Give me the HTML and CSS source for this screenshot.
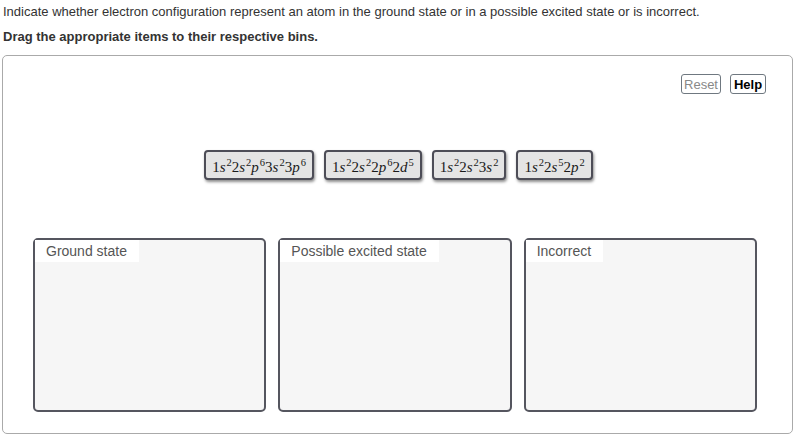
FILE: index.html
```html
<!DOCTYPE html>
<html>
<head>
<meta charset="utf-8">
<link rel="stylesheet" href="styles.css">
</head>
<body>
<p class="intro">Indicate whether electron configuration represent an atom in the ground state or in a possible excited state or is incorrect.</p>
<p class="instr">Drag the appropriate items to their respective bins.</p>
<div class="panel">
  <div class="toolbar">
    <button class="btn reset">Reset</button>
    <button class="btn help">Help</button>
  </div>
  <div class="chips">
    <div class="chip"><span class="m">1<i>s</i><sup>2</sup>2<i>s</i><sup>2</sup><i>p</i><sup>6</sup>3<i>s</i><sup>2</sup>3<i>p</i><sup>6</sup></span></div>
    <div class="chip"><span class="m">1<i>s</i><sup>2</sup>2<i>s</i><sup>2</sup>2<i>p</i><sup>6</sup>2<i>d</i><sup>5</sup></span></div>
    <div class="chip"><span class="m">1<i>s</i><sup>2</sup>2<i>s</i><sup>2</sup>3<i>s</i><sup>2</sup></span></div>
    <div class="chip"><span class="m">1<i>s</i><sup>2</sup>2<i>s</i><sup>5</sup>2<i>p</i><sup>2</sup></span></div>
  </div>
  <div class="bins">
    <div class="bin"><div class="label">Ground state</div></div>
    <div class="bin"><div class="label">Possible excited state</div></div>
    <div class="bin"><div class="label">Incorrect</div></div>
  </div>
</div>
</body>
</html>
```
FILE: styles.css
```css
html, body {
  margin: 0;
  padding: 0;
  background: #fff;
}
body {
  font-family: "Liberation Sans", Arial, sans-serif;
  color: #333;
}
.intro {
  margin: 0;
  padding: 4px 0 0 3px;
  font-size: 13px;
  line-height: 16px;
  color: #333;
}
.instr {
  margin: 0;
  padding: 9px 0 0 3px;
  font-size: 13px;
  line-height: 16px;
  font-weight: bold;
  color: #333;
}
.panel {
  margin: 10px 5px 0 2px;
  height: 377px;
  border: 1px solid #aaa;
  border-radius: 5px;
}
.toolbar {
  display: flex;
  justify-content: flex-end;
  gap: 9px;
  padding: 18px 26px 0 0;
}
.btn {
  font-family: "Liberation Sans", Arial, sans-serif;
  font-size: 13px;
  height: 20px;
  padding: 0;
  background: #fff;
  border: 1px solid #6f7880;
  border-radius: 3px;
  line-height: 17px;
}
.reset {
  color: #888;
  width: 40px;
}
.help {
  color: #000;
  font-weight: bold;
  width: 36px;
}
.chips {
  display: flex;
  justify-content: center;
  gap: 10px;
  margin-top: 56px;
  padding-left: 2px;
}
.chip {
  height: 30px;
  padding: 0 6px;
  box-sizing: border-box;
  display: flex;
  align-items: center;
  background: #e4e4e4;
  border: 2px solid #4d4d57;
  border-radius: 4px;
  box-shadow: 1px 2px 3px rgba(0,0,0,0.45);
  white-space: nowrap;
}
.m {
  font-family: "Liberation Serif", serif;
  font-size: 15px;
  color: #1a1a1a;
  line-height: 18px;
  padding-top: 3px;
}
.m i {
  font-style: italic;
}
.m sup {
  font-size: 10.5px;
  vertical-align: 6px;
  line-height: 0;
  margin-left: 1px;
}
.bins {
  display: flex;
  gap: 12px;
  padding: 58px 35px 0 30px;
}
.bin {
  flex: 1;
  height: 174px;
  box-sizing: border-box;
  background: #f6f6f6;
  border: 2px solid #55565f;
  border-radius: 5px;
}
.label {
  display: inline-block;
  background: #fff;
  color: #555;
  font-size: 14px;
  line-height: 22px;
  padding: 0 12px 0 11px;
}
```
